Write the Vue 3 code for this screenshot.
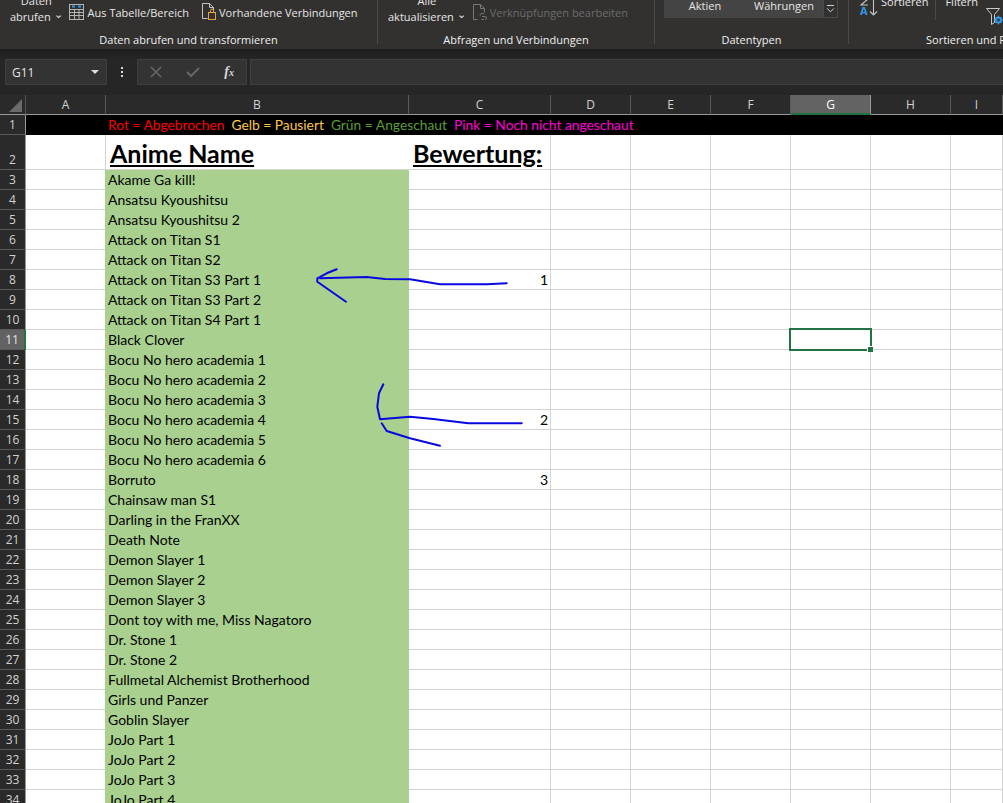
<template>
  <div class="app">
    <!-- ribbon, cut off at the top like the screenshot -->
    <div class="ribbon">
      <section class="group g-data">
        <div class="group-body">
          <div class="big-btn">Daten<br />abrufen <span class="chev">⌄</span></div>
          <div class="small-btn">
            <svg width="16" height="17" viewBox="0 0 16 17">
              <rect x="0.5" y="0.5" width="14" height="15" fill="none" stroke="#b5b5b5" />
              <path d="M1 5.5h13M1 8.5h13M1 11.5h13M5.5 5v10M10 5v10" stroke="#b5b5b5" fill="none" />
              <path d="M3 2.5h3M9 2.5h3" stroke="#2f9be8" stroke-width="2" />
            </svg>
            Aus Tabelle/Bereich
          </div>
          <div class="small-btn gap-l">
            <svg width="15" height="18" viewBox="0 0 15 18">
              <path d="M0.5 0.5h7l4 4v5M0.5 0.5v15h5M7.5 0.5v4h4" fill="none" stroke="#c4c4c4" />
              <rect x="6.5" y="9.5" width="7" height="7" fill="none" stroke="#e8a33d" />
              <path d="M8.5 9.5v-2a1.5 1.5 0 0 1 3 0v2" fill="none" stroke="#e8a33d" />
            </svg>
            Vorhandene Verbindungen
          </div>
        </div>
        <div class="group-label">Daten abrufen und transformieren</div>
      </section>
      <section class="group g-query">
        <div class="group-body">
          <div class="big-btn">Alle<br />aktualisieren <span class="chev">⌄</span></div>
          <div class="small-btn dim">
            <svg width="14" height="17" viewBox="0 0 14 17">
              <path d="M0.5 0.5h7l4 4v4M0.5 0.5v15h4M7.5 0.5v4h4" fill="none" stroke="#777" />
              <path d="M7 11.5a2 2 0 0 1 2-2h2M11 15.5H8.5M9 12.5h3a1.5 1.5 0 0 1 0 3" fill="none" stroke="#777" />
            </svg>
            Verknüpfungen bearbeiten
          </div>
        </div>
        <div class="group-label">Abfragen und Verbindungen</div>
      </section>
      <section class="group g-types">
        <div class="gallery">
          <span class="gal-item aktien">Aktien</span>
          <span class="gal-item waehrung">Währungen</span>
          <span class="gal-more">
            <svg width="9" height="9" viewBox="0 0 9 9">
              <path d="M1 1.5h7M1.2 4.5l3.3 3.3 3.3-3.3" fill="none" stroke="#d0d0d0" />
            </svg>
          </span>
        </div>
        <div class="group-label">Datentypen</div>
      </section>
      <section class="group g-sort">
        <div class="group-body">
          <svg class="sort-ic" width="18" height="18" viewBox="0 0 18 18">
            <path d="M1 1h7L1 7h7" fill="none" stroke="#c4c4c4" stroke-width="1.2" />
            <text x="0" y="17" class="az">A</text>
            <path d="M13.5 1v16M10 13.5l3.5 3.5 3.5-3.5" fill="none" stroke="#c4c4c4" stroke-width="1.1" />
          </svg>
          <span class="sort-text">Sortieren</span>
          <i class="sort-sep"></i>
          <span class="filter-text">Filtern</span>
          <svg class="funnel" width="19" height="19" viewBox="0 0 19 19">
            <path d="M0.5 1.5h13l-5 6v8l-3 2v-10z" fill="none" stroke="#c9c9c9" />
            <circle cx="12.5" cy="13" r="2.7" fill="none" stroke="#2f9be8" stroke-width="1.6" />
            <path d="M12.5 8.5v9M8 13h9M9.5 10l6 6M15.5 10l-6 6" stroke="#2f9be8" stroke-width="1" />
            <circle cx="12.5" cy="13" r="1.2" fill="#323130" />
          </svg>
        </div>
        <div class="group-label">Sortieren und Filtern</div>
      </section>
    </div>

    <div class="formula-bar">
      <div class="name-box">
        <span>G11</span>
        <i class="name-caret"></i>
      </div>
      <div class="dots"><i></i><i></i><i></i></div>
      <div class="fx-box">
        <svg width="12" height="12" viewBox="0 0 12 12">
          <path d="M1 1l10 10M11 1L1 11" stroke="#666" stroke-width="1.6" />
        </svg>
        <svg width="14" height="12" viewBox="0 0 14 12">
          <path d="M1 6l4 4 8-8" fill="none" stroke="#666" stroke-width="2" />
        </svg>
        <span class="fx"><em>f</em><small>x</small></span>
      </div>
      <div class="formula-input"></div>
    </div>

    <div class="sheet">
      <div class="head corner">
        <svg width="13" height="13" viewBox="0 0 13 13"><path d="M13 0v13H0z" fill="#6a6a6a" /></svg>
      </div>
      <div
        v-for="c in columns"
        :key="c"
        class="head col-head"
        :class="{ active: c === 'G' }"
      >{{ c }}</div>

      <template v-for="row in rows" :key="row.n">
        <div class="head row-head" :class="{ active: row.n === 11 }" :style="{ height: row.h + 'px' }">{{ row.n }}</div>

        <!-- row 1: black legend band -->
        <div v-if="row.n === 1" class="legend">
          <span class="red">Rot = Abgebrochen</span>
          <span class="yellow">Gelb = Pausiert</span>
          <span class="green">Grün = Angeschaut</span>
          <span class="pink">Pink = Noch nicht angeschaut</span>
        </div>

        <template v-else>
          <div class="cell"></div>
          <div class="cell name" :class="{ title: row.n === 2, filled: row.n > 2 }">{{ row.name }}</div>
          <div class="cell rating" :class="{ title: row.n === 2 }">{{ row.value }}</div>
          <div v-for="c in 6" :key="c" class="cell"></div>
        </template>
      </template>
    </div>

    <!-- pen strokes drawn over the sheet -->
    <svg class="ink" width="1003" height="803" viewBox="0 0 1003 803">
      <path d="M320 278.3L366.7 277L385 279L410 279.3L440 284.3L486.7 284.3L506.7 283.3" />
      <path d="M336.7 269.3L326.7 273.3L317.3 278.3L317.3 281.7L346 301.7" />
      <path d="M383.3 384.3L379 393.3L377.3 406.7L380 419.3L410 416.7L433.3 419L468.3 423.3L521.7 423.3" />
      <path d="M381.7 423.3L386.7 431L410 438.3L440 445.7" />
    </svg>

    <div class="selection"><i></i></div>
  </div>
</template>

<script setup>
const columns = ['A', 'B', 'C', 'D', 'E', 'F', 'G', 'H', 'I']

const names = [
  'Akame Ga kill!',
  'Ansatsu Kyoushitsu',
  'Ansatsu Kyoushitsu 2',
  'Attack on Titan S1',
  'Attack on Titan S2',
  'Attack on Titan S3 Part 1',
  'Attack on Titan S3 Part 2',
  'Attack on Titan S4 Part 1',
  'Black Clover',
  'Bocu No hero academia 1',
  'Bocu No hero academia 2',
  'Bocu No hero academia 3',
  'Bocu No hero academia 4',
  'Bocu No hero academia 5',
  'Bocu No hero academia 6',
  'Borruto',
  'Chainsaw man S1',
  'Darling in the FranXX',
  'Death Note',
  'Demon Slayer 1',
  'Demon Slayer 2',
  'Demon Slayer 3',
  'Dont toy with me, Miss Nagatoro',
  'Dr. Stone 1',
  'Dr. Stone 2',
  'Fullmetal Alchemist Brotherhood',
  'Girls und Panzer',
  'Goblin Slayer',
  'JoJo Part 1',
  'JoJo Part 2',
  'JoJo Part 3',
  'JoJo Part 4'
]

const ratings = { 8: 1, 15: 2, 18: 3 }

const rows = [
  { n: 1, h: 20 },
  { n: 2, h: 35, name: 'Anime Name', value: 'Bewertung:' },
  ...names.map((name, i) => ({ n: i + 3, h: 20, name, value: ratings[i + 3] }))
]
</script>

<style>
html, body {
  margin: 0;
  background: #262626;
}
</style>

<style scoped>
.app {
  position: relative;
  width: 1003px;
  height: 803px;
  overflow: hidden;
  background: #262626;
  font-family: "Open Sans", "Noto Sans", sans-serif;
}

/* ribbon */
.ribbon {
  display: flex;
  height: 49px;
  overflow: hidden;
  background: #323130;
  color: #e6e6e6;
  font-size: 11px;
}
.group {
  position: relative;
  flex: none;
  height: 44px;
  border-right: 1px solid #4b4a49;
}
.g-data { width: 377px; }
.g-query { width: 276px; }
.g-types { width: 193px; }
.g-sort { width: 160px; border-right: none; }
.group-label {
  position: absolute;
  left: 0;
  right: 0;
  bottom: -4px;
  height: 17px;
  line-height: 17px;
  text-align: center;
  white-space: nowrap;
  color: #f0f0f0;
}
.g-sort .group-label { left: 77px; right: auto; }
.group-body {
  position: absolute;
  left: 10px;
  bottom: 19px;
  display: flex;
  align-items: flex-end;
  white-space: nowrap;
}
.big-btn {
  line-height: 16px;
  text-align: center;
  margin-right: 6px;
}
.chev { font-size: 11px; position: relative; top: -3px; }
.small-btn {
  display: flex;
  align-items: center;
  gap: 3px;
  height: 20px;
  margin-bottom: 3px;
}
.gap-l { margin-left: 13px; gap: 2px; }
.dim { color: #6d6c6b; margin-left: 1px; }
.gallery {
  position: absolute;
  left: 9px;
  top: 0;
  width: 174px;
  height: 18px;
  background: #444;
  display: flex;
  line-height: 11px;
}
.gal-item { display: block; text-align: center; }
.aktien { width: 82px; }
.waehrung { width: 76px; }
.gal-more {
  width: 13px;
  margin-left: 1px;
  background: #323130;
  border: 1px solid #4b4a49;
  border-top: none;
  display: flex;
  align-items: center;
  justify-content: center;
}
.g-sort .group-body { left: 11px; align-items: flex-start; bottom: auto; top: -6px; }
.sort-ic { margin-top: 4px; }
.az { font: 700 11px "Open Sans", sans-serif; fill: #2f9be8; }
.sort-text { margin-left: 3px; line-height: 16px; }
.sort-sep { width: 1px; height: 26px; background: #4b4a49; margin: 0 9px 0 7px; }
.filter-text { line-height: 16px; }
.funnel { margin: 13px 0 0 8px; }

/* formula bar */
.formula-bar {
  display: flex;
  align-items: stretch;
  height: 46px;
  box-sizing: border-box;
  padding: 10px 0 10px 5px;
  background: linear-gradient(#1d1d1d, #262626 10px);
}
.name-box {
  width: 102px;
  box-sizing: border-box;
  background: #333;
  border: 1px solid #3f3f3f;
  color: #e4e4e4;
  font-size: 12px;
  display: flex;
  align-items: center;
  justify-content: space-between;
  padding: 0 7px 0 6px;
}
.name-caret {
  width: 0;
  height: 0;
  border-left: 4px solid transparent;
  border-right: 4px solid transparent;
  border-top: 4px solid #dcdcdc;
}
.dots {
  width: 30px;
  display: flex;
  flex-direction: column;
  align-items: center;
  justify-content: center;
  gap: 2px;
}
.dots i {
  width: 2px;
  height: 2px;
  background: #dcdcdc;
}
.fx-box {
  width: 110px;
  box-sizing: border-box;
  background: #333;
  border: 1px solid #3f3f3f;
  display: flex;
  align-items: center;
  justify-content: space-between;
  padding: 0 12px;
}
.fx {
  color: #d8d8d8;
  font-family: "Liberation Serif", serif;
  font-weight: 700;
  font-size: 14px;
}
.fx small { font-size: 10px; font-style: italic; }
.formula-input {
  flex: 1;
  margin-left: 3px;
  background: #333;
  border: 1px solid #3f3f3f;
  border-right: none;
}

/* sheet */
.sheet {
  display: grid;
  grid-template-columns: 26px 80px 303px 142px 80px 80px 80px 80px 80px 52px;
  background: #fff;
  font-family: Lato, "Open Sans", sans-serif;
  font-size: 14px;
  color: #000;
}
.head {
  background: #2a2a2a;
  color: #d2d2d2;
  box-sizing: border-box;
  display: flex;
  align-items: center;
  justify-content: center;
  font-family: "Open Sans", sans-serif;
  font-size: 12px;
}
.corner {
  height: 20px;
  border-right: 1px solid #555;
  border-bottom: 1px solid #9a9a9a;
  justify-content: flex-end;
  align-items: flex-end;
  padding: 0 3px 2px 0;
}
.col-head {
  height: 20px;
  border-right: 1px solid #5a5a5a;
  border-bottom: 1px solid #9a9a9a;
}
.col-head.active {
  background: #636363;
  color: #fff;
  border-right-color: #9a9a9a;
  border-bottom: 2px solid #217346;
}
.row-head {
  border-right: 1px solid #9a9a9a;
  border-bottom: 1px solid #5a5a5a;
  align-items: flex-end;
  padding-bottom: 1px;
}
.row-head.active {
  background: #636363;
  color: #e4e4e4;
  border-right: 2px solid #217346;
}
.legend {
  grid-column: 2 / -1;
  height: 20px;
  background: #000;
  box-sizing: border-box;
  padding-left: 82px;
  font-size: 13.8px;
  line-height: 20px;
  white-space: pre;
  display: flex;
  gap: 7px;
}
.red { color: #ff0000; }
.yellow { color: #ffc84a; }
.green { color: #5a9e32; }
.pink { color: #ff00d8; }
.cell {
  box-sizing: border-box;
  min-width: 0;
  border-right: 1px solid #d4d4d4;
  border-bottom: 1px solid #d4d4d4;
  line-height: 19px;
  padding: 0 2px;
  white-space: nowrap;
}
.name.filled {
  background: #a9d08e;
  border-color: #a9d08e;
  box-shadow: -1px 0 0 #a9d08e;
  overflow: visible;
}
.title {
  height: 35px;
  font-size: 25px;
  font-weight: 700;
  line-height: 36px;
  text-decoration: underline;
  border-right-color: transparent;
  padding-left: 4px;
}
.rating:not(.title) { text-align: right; }
.rating.title { border-right-color: #d4d4d4; }
.ink {
  position: absolute;
  left: 0;
  top: 0;
  pointer-events: none;
}
.ink path {
  fill: none;
  stroke: #0808e0;
  stroke-width: 2;
  stroke-linejoin: round;
  stroke-linecap: round;
}
.selection {
  position: absolute;
  left: 789px;
  top: 328px;
  width: 83px;
  height: 23px;
  box-sizing: border-box;
  border: 2px solid #217346;
}
.selection i {
  position: absolute;
  right: -3px;
  bottom: -3px;
  width: 5px;
  height: 5px;
  background: #217346;
  border: 1px solid #fff;
  border-width: 1px 0 0 1px;
}
</style>
